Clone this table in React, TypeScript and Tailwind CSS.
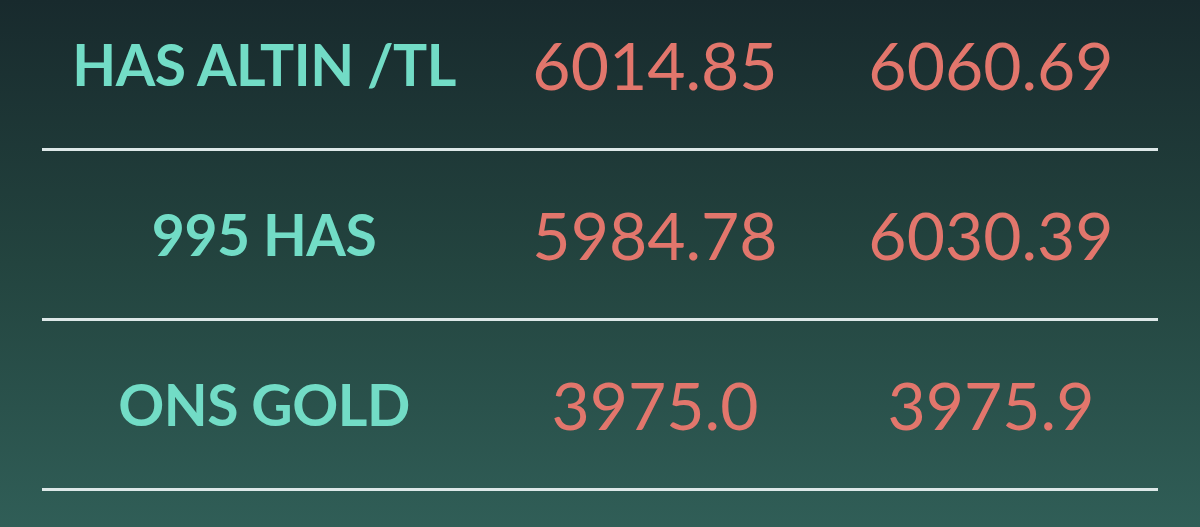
import React from "react";

/* =========================
   DATA
========================== */
const rows = [
  { label: "HAS ALTIN /TL", buy: "6014.85", sell: "6060.69" },
  { label: "995 HAS", buy: "5984.78", sell: "6030.39" },
  { label: "ONS GOLD", buy: "3975.0", sell: "3975.9" },
];

export default function App() {
  return (
    <div className="w-[1200px] h-[527px] overflow-hidden bg-gradient-to-b from-[#182a2d] via-[#23443f] to-[#305e57] font-['Lato',sans-serif]">
      <div className="-mt-[19px] px-[42px]">
        {rows.map((r) => (
          <div
            key={r.label}
            className="grid grid-cols-[444px_338px_1fr] items-center h-[170px] border-b-[3px] border-[#dde8e8]"
          >
            <div className="text-center text-[57px] font-bold text-[#72dcc6] tracking-[-0.5px]">
              {r.label}
            </div>
            <div className="text-center text-[66px] font-normal text-[#e2766c]">
              {r.buy}
            </div>
            <div className="text-center text-[66px] font-normal text-[#e2766c]">
              {r.sell}
            </div>
          </div>
        ))}
      </div>
    </div>
  );
}
